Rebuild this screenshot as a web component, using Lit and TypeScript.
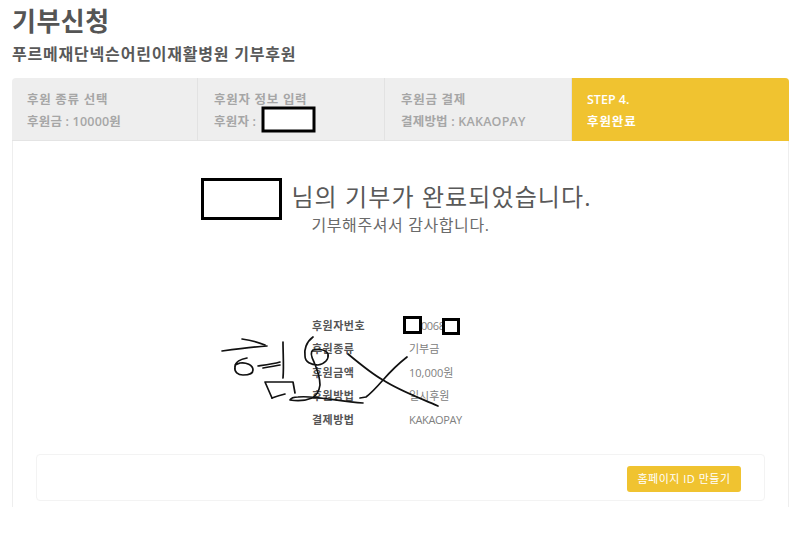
import { LitElement, html, css, svg } from "lit";
import { customElement } from "lit/decorators.js";

const steps = [
  { title: "후원 종류 선택", sub: "후원금 : 10000원" },
  { title: "후원자 정보 입력", sub: "후원자 :" },
  { title: "후원금 결제", sub: "결제방법 : KAKAOPAY" },
  { title: "STEP 4.", sub: "후원완료", active: true },
];

const rows = [
  { k: "후원자번호", v: "00006800", latin: true },
  { k: "후원종류", v: "기부금" },
  { k: "후원금액", v: "10,000원" },
  { k: "후원방법", v: "일시후원" },
  { k: "결제방법", v: "KAKAOPAY", latin: true },
];

const strokes = [
  "M242 339 C250 340 258 342 265 345",
  "M222 351 C237 349 252 347 267 346",
  "M247 358 C241 359 235 362 235 367 C234 372 238 375 243 375 C248 375 253 374 253 370 C253 365 246 362 240 363 L235 365",
  "M258 366 C265 365 273 364 280 362",
  "M263 368 C269 367 275 366 280 365",
  "M283 342 C283 354 284 366 283 378",
  "M272 398 L265 382 C274 382 284 382 293 382 L295 393",
  "M272 398 C277 396 281 395 285 394",
  "M313 337 C306 342 304 350 305 356 C305 362 311 365 318 365 C325 364 329 359 328 354 C326 349 318 349 313 350 C310 352 312 358 314 362 C317 369 320 378 320 385 C319 392 316 396 312 398 C305 401 296 401 290 400 C291 398 294 397 298 397 C315 395 340 402 363 403",
  "M348 354 C360 364 372 374 383 380 C400 391 420 398 438 406",
  "M407 357 C398 364 390 372 383 380 C376 388 370 394 366 397 L360 398",
];

const boxes = [
  [263, 108, 51, 23],
  [404.5, 317.5, 16, 15],
  [443.5, 319.5, 15, 14],
];

@customElement("app-root")
export class AppRoot extends LitElement {
  static styles = css`
    :host {
      display: block;
      position: relative;
      width: 800px;
      height: 555px;
      box-sizing: border-box;
      padding: 0 11px 0 12px;
      background: #fff;
      font-family: "Open Sans", "Noto Sans CJK KR", sans-serif;
      overflow: hidden;
    }
    h1 {
      margin: 0;
      padding-top: 3px;
      font-size: 26px;
      line-height: 36px;
      font-weight: 700;
      color: #555;
      letter-spacing: 0.5px;
    }
    h2 {
      margin: 0;
      padding-top: 3px;
      font-size: 16px;
      line-height: 24px;
      font-weight: 700;
      color: #595959;
      letter-spacing: 0.8px;
    }
    .stepper {
      display: grid;
      grid-template-columns: 186px 187px 187px 1fr;
      height: 63px;
      margin-top: 12px;
      background: #eee;
      border-radius: 4px 4px 0 0;
      overflow: hidden;
    }
    .step {
      box-sizing: border-box;
      padding: 11px 0 0 15px;
      border-right: 1px solid #e2e2e2;
      border-bottom: 1px solid #e4e4e4;
      color: #a6a6a6;
      font-size: 12.5px;
      font-weight: 600;
      line-height: 22px;
      letter-spacing: 0.7px;
    }
    .step .sub {
      letter-spacing: 0.2px;
    }
    .step:nth-child(2),
    .step:nth-child(3) {
      padding-left: 16px;
    }
    .step.active {
      background: #f0c330;
      border: 0;
      color: #fff;
      letter-spacing: 0;
    }
    .step.active .sub {
      letter-spacing: 0.9px;
    }
    .panel {
      height: 366px;
      box-sizing: border-box;
      border: 1px solid #eee;
      border-width: 0 1px;
      padding-top: 37px;
    }
    .done {
      display: flex;
      justify-content: center;
      align-items: flex-start;
      gap: 9px;
      margin-left: -8px;
      font-size: 24px;
      line-height: 38px;
      color: #595959;
      letter-spacing: 1.1px;
    }
    .done .txt {
      height: 35px;
    }
    .name {
      display: block;
      box-sizing: border-box;
      width: 81px;
      height: 42px;
      margin-bottom: -7px;
      border: 3px solid #000;
      background: #fff;
    }
    .thanks {
      margin: 0;
      text-align: center;
      font-size: 16px;
      line-height: 24px;
      color: #6a6a6a;
      letter-spacing: 0.6px;
    }
    .info {
      display: grid;
      grid-template-columns: 97px auto;
      grid-auto-rows: 23.4px;
      margin: 77px 0 0 299px;
      font-size: 11px;
      line-height: 23.4px;
    }
    .info .k {
      font-weight: 700;
      color: #555;
      letter-spacing: 0.5px;
    }
    .info .v {
      color: #808080;
    }
    .info .v.latin {
      letter-spacing: -0.35px;
    }
    .actions {
      display: flex;
      justify-content: flex-end;
      align-items: center;
      box-sizing: border-box;
      height: 47px;
      margin: 23px 23px 0 23px;
      padding: 4px 23px 0 0;
      border: 1px solid #f3f3f3;
      border-radius: 4px;
    }
    .btn {
      box-sizing: border-box;
      width: 114px;
      height: 26px;
      border: 0;
      border-radius: 3px;
      background: #f0c330;
      color: #fff;
      font-family: inherit;
      font-size: 11px;
      line-height: 26px;
      letter-spacing: 0.5px;
      padding: 0;
    }
    .overlay {
      position: absolute;
      left: 0;
      top: 0;
      width: 800px;
      height: 555px;
      pointer-events: none;
    }
    .overlay rect {
      fill: #fff;
      stroke: #000;
      stroke-width: 3;
    }
    .overlay path {
      fill: none;
      stroke: #111;
      stroke-width: 1.7;
      stroke-linecap: round;
      stroke-linejoin: round;
    }
  `;

  render() {
    return html`
      <h1>기부신청</h1>
      <h2>푸르메재단넥슨어린이재활병원 기부후원</h2>
      <div class="stepper">
        ${steps.map(
          (s) => html`<div class="step ${s.active ? "active" : ""}">
            <div>${s.title}</div>
            <div class="sub">${s.sub}</div>
          </div>`
        )}
      </div>
      <div class="panel">
        <div class="done">
          <span class="name"></span>
          <span class="txt">님의 기부가 완료되었습니다.</span>
        </div>
        <p class="thanks">기부해주셔서 감사합니다.</p>
        <div class="info">
          ${rows.map(
            (r) => html`<div class="k">${r.k}</div><div class="v ${r.latin ? "latin" : ""}">${r.v}</div>`
          )}
        </div>
        <div class="actions"><button class="btn">홈페이지 ID 만들기</button></div>
      </div>
      <svg class="overlay" viewBox="0 0 800 555">
        ${boxes.map(
          ([x, y, w, h]) => svg`<rect x=${x} y=${y} width=${w} height=${h}></rect>`
        )}
        ${strokes.map((d) => svg`<path d=${d}></path>`)}
      </svg>
    `;
  }
}
